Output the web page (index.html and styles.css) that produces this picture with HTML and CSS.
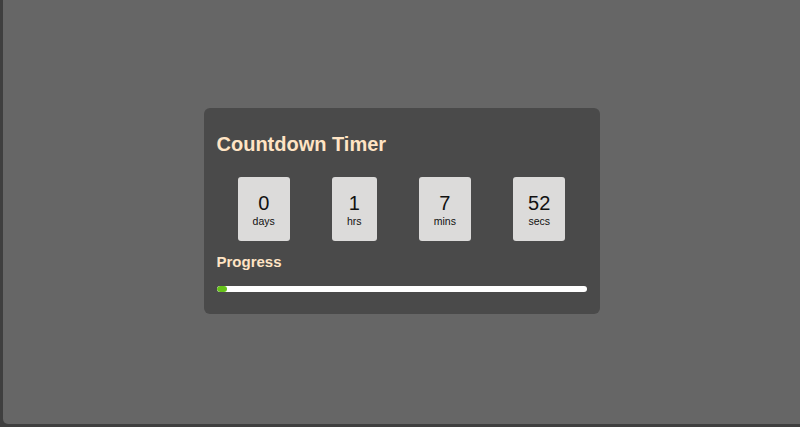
FILE: index.html
```html
<!DOCTYPE html>
<html>
<head>
<meta charset="utf-8">
<link rel="stylesheet" href="styles.css">
</head>
<body>
<div class="frame">
  <div class="card">
    <h2 class="title">Countdown Timer</h2>
    <div class="units">
      <div class="unit"><span class="num">0</span><span class="lbl">days</span></div>
      <div class="unit"><span class="num">1</span><span class="lbl">hrs</span></div>
      <div class="unit"><span class="num">7</span><span class="lbl">mins</span></div>
      <div class="unit"><span class="num">52</span><span class="lbl">secs</span></div>
    </div>
    <h3 class="sub">Progress</h3>
    <div class="bar"><div class="fill" style="width:10px"></div></div>
  </div>
</div>
</body>
</html>
```
FILE: styles.css
```css
html, body {
  margin: 0;
  padding: 0;
}
body {
  background: #3f3f3f;
  font-family: "Liberation Sans", Arial, sans-serif;
  width: 800px;
  height: 427px;
  overflow: hidden;
}
.frame {
  box-sizing: border-box;
  margin-left: 3px;
  height: 424px;
  padding-bottom: 2px;
  background: #666666;
  border-bottom-left-radius: 5px;
  display: flex;
  align-items: center;
  justify-content: center;
}
.card {
  width: 370px;
  padding: 25px 13px 22px;
  background: #4a4a4a;
  border-radius: 6px;
  display: flex;
  flex-direction: column;
}
.title {
  margin: 0;
  font-size: 20px;
  line-height: 23px;
  font-weight: bold;
  color: #ffe4c4;
}
.units {
  display: flex;
  justify-content: space-around;
  margin-top: 21px;
}
.unit {
  background: #dcdbda;
  border-radius: 3px;
  padding: 15px 15px 14px;
  display: flex;
  flex-direction: column;
  align-items: center;
  color: #111;
}
.num {
  font-size: 20px;
  line-height: 23px;
}
.lbl {
  font-size: 10.5px;
  line-height: 12px;
}
.sub {
  margin: 12px 0 0;
  font-size: 15px;
  line-height: 17px;
  font-weight: bold;
  color: #ffe4c4;
}
.bar {
  margin-top: 16px;
  height: 6px;
  background: #ffffff;
  border-radius: 3px;
  overflow: hidden;
}
.fill {
  height: 100%;
  background: #66c219;
  border-radius: 3px;
}
```
